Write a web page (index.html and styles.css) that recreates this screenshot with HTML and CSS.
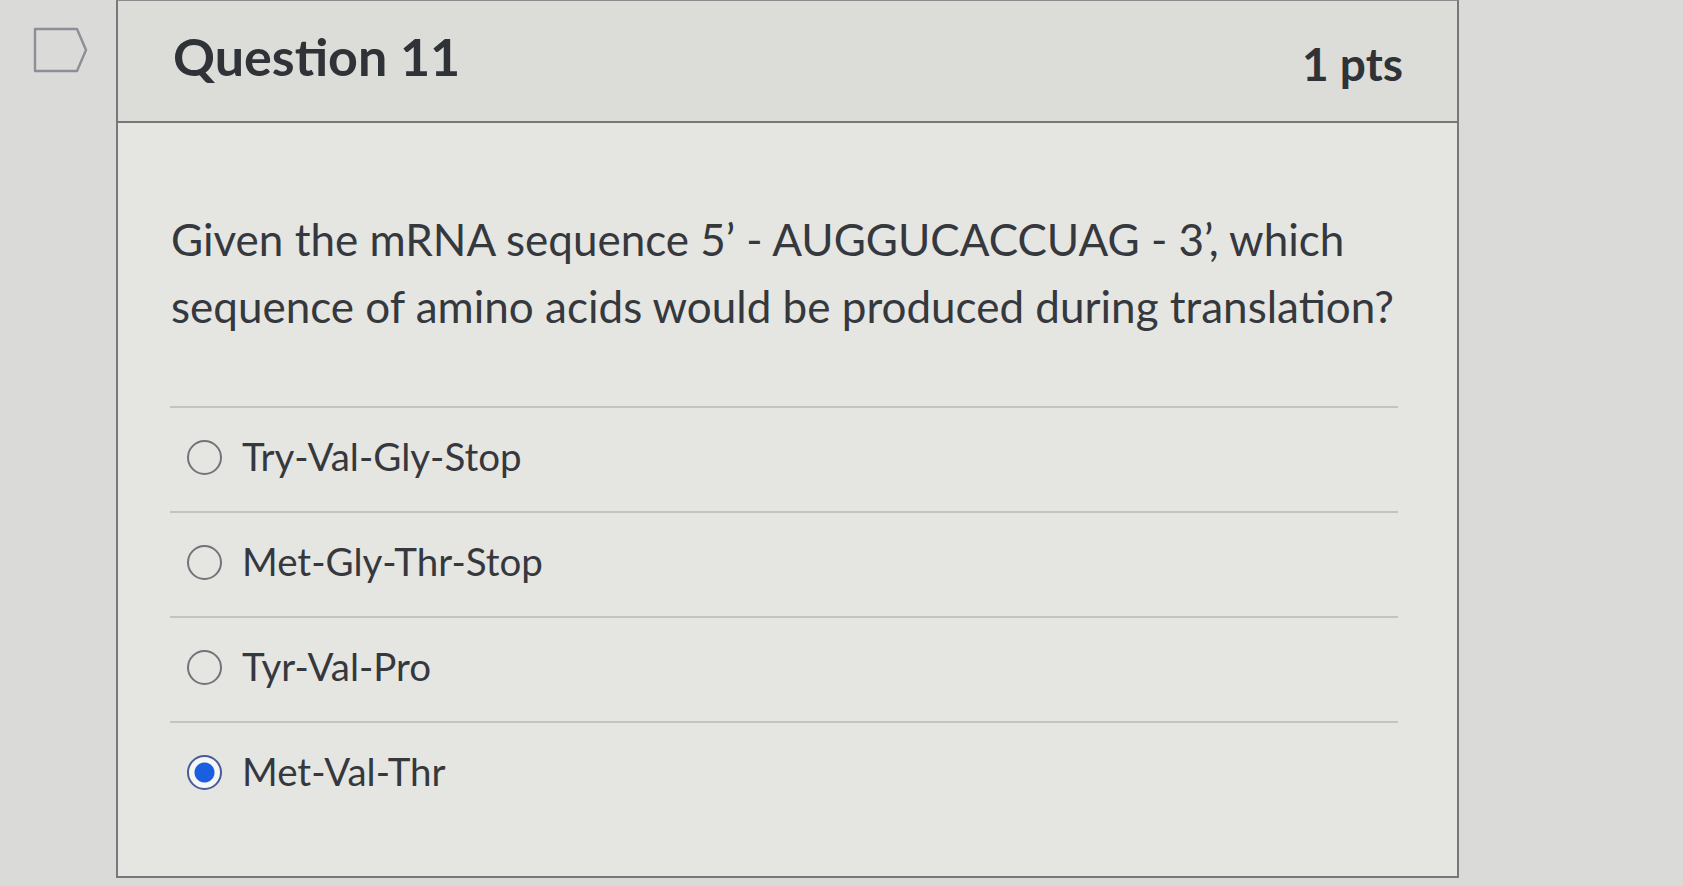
FILE: index.html
```html
<!DOCTYPE html>
<html lang="en">
<head>
<meta charset="utf-8">
<title>Question 11</title>
<link rel="stylesheet" href="styles.css">
</head>
<body>
<div class="page">
  <div class="gutter">
    <svg class="flag" width="56" height="46" viewBox="0 0 56 46" aria-hidden="true">
      <path d="M2 2 H44 L53 23 L44 44 H2 Z" fill="none" stroke="#8c9096" stroke-width="2.4" stroke-linejoin="round"/>
    </svg>
  </div>
  <div class="card">
    <div class="header">
      <h2 class="qname">Question 11</h2>
      <span class="points">1 pts</span>
    </div>
    <div class="body">
      <p class="qtext">Given the mRNA sequence 5’ - AUGGUCACCUAG - 3’, which sequence of amino acids would be produced during translation?</p>
      <div class="answers">
        <label class="answer"><span class="radio"></span><span class="atext">Try-Val-Gly-Stop</span></label>
        <label class="answer"><span class="radio"></span><span class="atext">Met-Gly-Thr-Stop</span></label>
        <label class="answer"><span class="radio"></span><span class="atext">Tyr-Val-Pro</span></label>
        <label class="answer"><span class="radio checked"></span><span class="atext">Met-Val-Thr</span></label>
      </div>
    </div>
  </div>
  <div class="rest"></div>
</div>
</body>
</html>
```
FILE: styles.css
```css
html, body {
  margin: 0;
  padding: 0;
  background: #dadad8;
  font-family: Lato, "Noto Sans", sans-serif;
  color: #33363b;
}
.page {
  display: flex;
  align-items: flex-start;
  height: 886px;
  overflow: hidden;
}
.gutter {
  width: 116px;
  flex: none;
  padding-top: 27px;
  padding-left: 33px;
  box-sizing: border-box;
}
.flag {
  display: block;
}
.card {
  width: 1343px;
  flex: none;
  box-sizing: border-box;
  border: 2px solid #76787a;
  border-top: 1px solid #8a8c8e;
  background: #e5e5e2;
}
.header {
  display: flex;
  justify-content: space-between;
  align-items: baseline;
  background: #dcdcd9;
  border-bottom: 2px solid #75777a;
  height: 122px;
  box-sizing: border-box;
  padding: 24px 54px 0 55px;
}
.qname {
  margin: 0;
  font-size: 52px;
  font-weight: 700;
  line-height: 62px;
  color: #2f3237;
}
.points {
  font-size: 46px;
  font-weight: 700;
  line-height: 62px;
  color: #2f3237;
  position: relative;
  top: 5px;
}
.body {
  padding: 83px 59px 50px 50px;
}
.qtext {
  margin: 0 0 66px 0;
  padding-left: 3px;
  font-size: 44px;
  line-height: 67px;
  color: #35383d;
}
.answers {
  display: flex;
  flex-direction: column;
  padding-left: 2px;
}
.answer {
  display: flex;
  align-items: center;
  height: 105px;
  box-sizing: border-box;
  border-top: 2px solid #c3c3c1;
  padding-left: 17px;
  gap: 20px;
}
.radio {
  width: 35px;
  height: 35px;
  box-sizing: border-box;
  border: 2px solid #717478;
  border-radius: 50%;
  flex: none;
  position: relative;
  top: -2px;
}
.radio.checked {
  border: 2px solid #4a5c97;
  background: radial-gradient(circle, #1a5fe0 0 9.5px, #f6f6f4 10.5px);
}
.atext {
  font-size: 38.5px;
  line-height: 50px;
  color: #35383d;
  position: relative;
  top: -4px;
}
.rest {
  flex: 1;
}
```
